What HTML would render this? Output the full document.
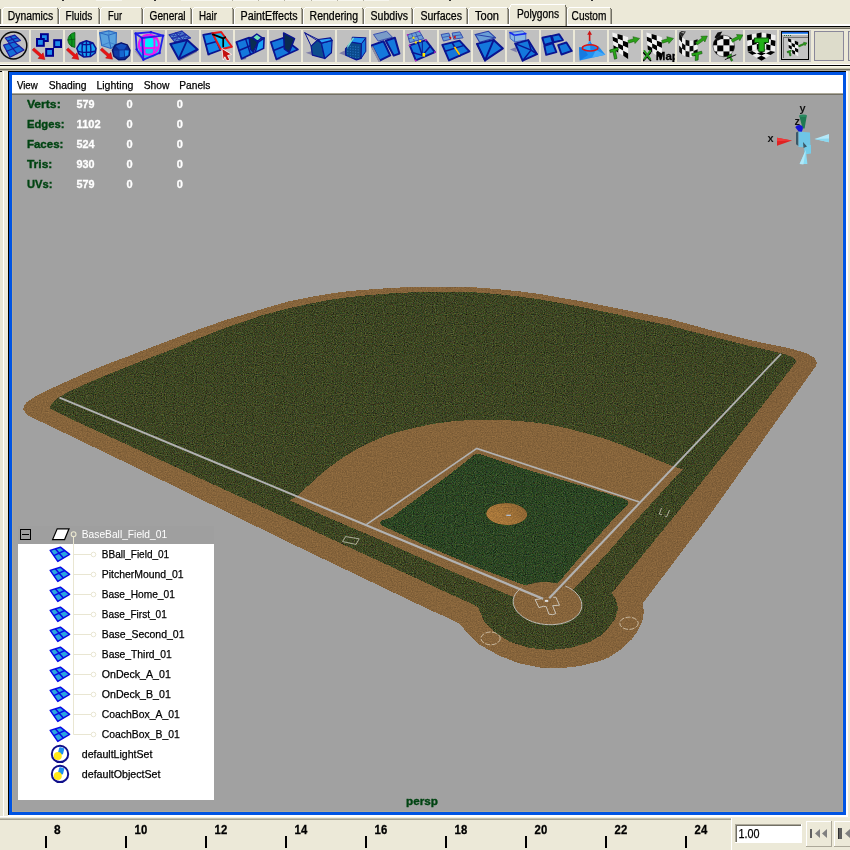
<!DOCTYPE html>
<html><head><meta charset="utf-8"><title>Maya</title>
<style>
html,body{margin:0;padding:0;width:850px;height:850px;overflow:hidden;background:#ece9d8;}
svg{display:block;font-family:"Liberation Sans",sans-serif;}
</style></head><body>
<svg width="850" height="850" viewBox="0 0 850 850" style="opacity:0.9999">
<g shape-rendering="crispEdges">
<rect x="0" y="0" width="850" height="850" fill="#ece9d8" />
<rect x="96" y="0" width="26" height="1" fill="#f6f5ee" />
<rect x="181" y="0" width="208" height="1" fill="#f6f5ee" />
<rect x="232" y="0" width="1" height="1" fill="#b5b2a2" />
<rect x="258" y="0" width="1" height="1" fill="#b5b2a2" />
<rect x="284" y="0" width="1" height="1" fill="#b5b2a2" />
<rect x="311" y="0" width="1" height="1" fill="#b5b2a2" />
<rect x="337" y="0" width="1" height="1" fill="#b5b2a2" />
<rect x="363" y="0" width="1" height="1" fill="#b5b2a2" />
<rect x="62" y="0" width="2" height="1" fill="#303030" />
<rect x="154" y="0" width="2" height="1" fill="#303030" />
<rect x="449" y="0" width="2" height="1" fill="#303030" />
<rect x="591" y="0" width="2" height="1" fill="#303030" />
<rect x="0" y="9" width="1" height="15" fill="#716f64" />
<rect x="2" y="9" width="1" height="15" fill="#ffffff" />
<rect x="3" y="8" width="1" height="1" fill="#ffffff" />
<rect x="4" y="7" width="53" height="1" fill="#ffffff" />
<rect x="57" y="9" width="1" height="15" fill="#aca899" />
<rect x="58" y="9" width="1" height="15" fill="#716f64" />
<rect x="57" y="8" width="1" height="1" fill="#716f64" />
<rect x="59" y="9" width="1" height="15" fill="#ffffff" />
<rect x="60" y="8" width="1" height="1" fill="#ffffff" />
<rect x="61" y="7" width="37" height="1" fill="#ffffff" />
<rect x="98" y="9" width="1" height="15" fill="#aca899" />
<rect x="99" y="9" width="1" height="15" fill="#716f64" />
<rect x="98" y="8" width="1" height="1" fill="#716f64" />
<rect x="100" y="9" width="1" height="15" fill="#ffffff" />
<rect x="101" y="8" width="1" height="1" fill="#ffffff" />
<rect x="102" y="7" width="39" height="1" fill="#ffffff" />
<rect x="141" y="9" width="1" height="15" fill="#aca899" />
<rect x="142" y="9" width="1" height="15" fill="#716f64" />
<rect x="141" y="8" width="1" height="1" fill="#716f64" />
<rect x="143" y="9" width="1" height="15" fill="#ffffff" />
<rect x="144" y="8" width="1" height="1" fill="#ffffff" />
<rect x="145" y="7" width="45" height="1" fill="#ffffff" />
<rect x="190" y="9" width="1" height="15" fill="#aca899" />
<rect x="191" y="9" width="1" height="15" fill="#716f64" />
<rect x="190" y="8" width="1" height="1" fill="#716f64" />
<rect x="192" y="9" width="1" height="15" fill="#ffffff" />
<rect x="193" y="8" width="1" height="1" fill="#ffffff" />
<rect x="194" y="7" width="38" height="1" fill="#ffffff" />
<rect x="232" y="9" width="1" height="15" fill="#aca899" />
<rect x="233" y="9" width="1" height="15" fill="#716f64" />
<rect x="232" y="8" width="1" height="1" fill="#716f64" />
<rect x="234" y="9" width="1" height="15" fill="#ffffff" />
<rect x="235" y="8" width="1" height="1" fill="#ffffff" />
<rect x="236" y="7" width="65" height="1" fill="#ffffff" />
<rect x="301" y="9" width="1" height="15" fill="#aca899" />
<rect x="302" y="9" width="1" height="15" fill="#716f64" />
<rect x="301" y="8" width="1" height="1" fill="#716f64" />
<rect x="303" y="9" width="1" height="15" fill="#ffffff" />
<rect x="304" y="8" width="1" height="1" fill="#ffffff" />
<rect x="305" y="7" width="57" height="1" fill="#ffffff" />
<rect x="362" y="9" width="1" height="15" fill="#aca899" />
<rect x="363" y="9" width="1" height="15" fill="#716f64" />
<rect x="362" y="8" width="1" height="1" fill="#716f64" />
<rect x="364" y="9" width="1" height="15" fill="#ffffff" />
<rect x="365" y="8" width="1" height="1" fill="#ffffff" />
<rect x="366" y="7" width="45" height="1" fill="#ffffff" />
<rect x="411" y="9" width="1" height="15" fill="#aca899" />
<rect x="412" y="9" width="1" height="15" fill="#716f64" />
<rect x="411" y="8" width="1" height="1" fill="#716f64" />
<rect x="413" y="9" width="1" height="15" fill="#ffffff" />
<rect x="414" y="8" width="1" height="1" fill="#ffffff" />
<rect x="415" y="7" width="51" height="1" fill="#ffffff" />
<rect x="466" y="9" width="1" height="15" fill="#aca899" />
<rect x="467" y="9" width="1" height="15" fill="#716f64" />
<rect x="466" y="8" width="1" height="1" fill="#716f64" />
<rect x="468" y="9" width="1" height="15" fill="#ffffff" />
<rect x="469" y="8" width="1" height="1" fill="#ffffff" />
<rect x="470" y="7" width="37" height="1" fill="#ffffff" />
<rect x="507" y="9" width="1" height="15" fill="#aca899" />
<rect x="508" y="9" width="1" height="15" fill="#716f64" />
<rect x="507" y="8" width="1" height="1" fill="#716f64" />
<rect x="567" y="9" width="1" height="15" fill="#ffffff" />
<rect x="568" y="8" width="1" height="1" fill="#ffffff" />
<rect x="569" y="7" width="41" height="1" fill="#ffffff" />
<rect x="610" y="9" width="1" height="15" fill="#aca899" />
<rect x="611" y="9" width="1" height="15" fill="#716f64" />
<rect x="610" y="8" width="1" height="1" fill="#716f64" />
<rect x="0" y="24" width="850" height="2" fill="#ffffff" />
<rect x="0" y="26" width="850" height="1" fill="#000" />
<rect x="0" y="27" width="850" height="1" fill="#b0aa9b" />
<rect x="0" y="28" width="850" height="1" fill="#706e60" />
<rect x="0" y="29" width="850" height="1" fill="#f0eadc" />
<rect x="509" y="5" width="57" height="21" fill="#ece9d8" />
<rect x="509" y="7" width="1" height="19" fill="#ffffff" />
<rect x="510" y="5" width="1" height="2" fill="#ffffff" />
<rect x="511" y="4" width="54" height="1" fill="#ffffff" />
<rect x="565" y="7" width="1" height="19" fill="#aca899" />
<rect x="566" y="7" width="1" height="19" fill="#716f64" />
<rect x="565" y="5" width="1" height="2" fill="#716f64" />
</g>
<text x="7.8" y="20" font-size="12" fill="#000" font-weight="normal" textLength="45.3" lengthAdjust="spacingAndGlyphs"  stroke="#000" stroke-width="0.25">Dynamics</text>
<text x="65.6" y="20" font-size="12" fill="#000" font-weight="normal" textLength="26.8" lengthAdjust="spacingAndGlyphs"  stroke="#000" stroke-width="0.25">Fluids</text>
<text x="108" y="20" font-size="12" fill="#000" font-weight="normal" textLength="14" lengthAdjust="spacingAndGlyphs"  stroke="#000" stroke-width="0.25">Fur</text>
<text x="149.6" y="20" font-size="12" fill="#000" font-weight="normal" textLength="36.0" lengthAdjust="spacingAndGlyphs"  stroke="#000" stroke-width="0.25">General</text>
<text x="199" y="20" font-size="12" fill="#000" font-weight="normal" textLength="18" lengthAdjust="spacingAndGlyphs"  stroke="#000" stroke-width="0.25">Hair</text>
<text x="240.6" y="20" font-size="12" fill="#000" font-weight="normal" textLength="57.0" lengthAdjust="spacingAndGlyphs"  stroke="#000" stroke-width="0.25">PaintEffects</text>
<text x="309.6" y="20" font-size="12" fill="#000" font-weight="normal" textLength="48.4" lengthAdjust="spacingAndGlyphs"  stroke="#000" stroke-width="0.25">Rendering</text>
<text x="370.6" y="20" font-size="12" fill="#000" font-weight="normal" textLength="37.4" lengthAdjust="spacingAndGlyphs"  stroke="#000" stroke-width="0.25">Subdivs</text>
<text x="420.4" y="20" font-size="12" fill="#000" font-weight="normal" textLength="41.6" lengthAdjust="spacingAndGlyphs"  stroke="#000" stroke-width="0.25">Surfaces</text>
<text x="475" y="20" font-size="12" fill="#000" font-weight="normal" textLength="24" lengthAdjust="spacingAndGlyphs"  stroke="#000" stroke-width="0.25">Toon</text>
<text x="571.6" y="20" font-size="12" fill="#000" font-weight="normal" textLength="34.8" lengthAdjust="spacingAndGlyphs"  stroke="#000" stroke-width="0.25">Custom</text>
<text x="517" y="18" font-size="12" fill="#000" font-weight="normal" textLength="42" lengthAdjust="spacingAndGlyphs"  stroke="#000" stroke-width="0.25">Polygons</text>
<g shape-rendering="crispEdges">
<rect x="-3" y="30" width="32" height="32" fill="#c0c0c0" />
<rect x="31" y="30" width="32" height="32" fill="#c0c0c0" />
<rect x="65" y="30" width="32" height="32" fill="#c0c0c0" />
<rect x="99" y="30" width="32" height="32" fill="#c0c0c0" />
<rect x="133" y="30" width="32" height="32" fill="#c0c0c0" />
<rect x="167" y="30" width="32" height="32" fill="#c0c0c0" />
<rect x="201" y="30" width="32" height="32" fill="#c0c0c0" />
<rect x="235" y="30" width="32" height="32" fill="#c0c0c0" />
<rect x="269" y="30" width="32" height="32" fill="#c0c0c0" />
<rect x="303" y="30" width="32" height="32" fill="#c0c0c0" />
<rect x="337" y="30" width="32" height="32" fill="#c0c0c0" />
<rect x="371" y="30" width="32" height="32" fill="#c0c0c0" />
<rect x="405" y="30" width="32" height="32" fill="#c0c0c0" />
<rect x="439" y="30" width="32" height="32" fill="#c0c0c0" />
<rect x="473" y="30" width="32" height="32" fill="#c0c0c0" />
<rect x="507" y="30" width="32" height="32" fill="#c0c0c0" />
<rect x="541" y="30" width="32" height="32" fill="#c0c0c0" />
<rect x="575" y="30" width="32" height="32" fill="#c0c0c0" />
<rect x="609" y="30" width="32" height="32" fill="#c0c0c0" />
<rect x="643" y="30" width="32" height="32" fill="#c0c0c0" />
<rect x="677" y="30" width="32" height="32" fill="#c0c0c0" />
<rect x="711" y="30" width="32" height="32" fill="#c0c0c0" />
<rect x="745" y="30" width="32" height="32" fill="#c0c0c0" />
<rect x="779" y="30" width="32" height="32" fill="#c0c0c0" />
<rect x="814.5" y="31.5" width="29" height="29" fill="#dddccb" stroke="#8a889a" stroke-width="1"/>
<rect x="848.5" y="31.5" width="29" height="29" fill="#dddccb" stroke="#8a889a" stroke-width="1"/>
<rect x="0" y="64" width="850" height="1" fill="#ffffff" />
<rect x="0" y="65" width="850" height="1" fill="#000" />
<rect x="0" y="66" width="850" height="1" fill="#fdfbeb" />
<rect x="0" y="67" width="850" height="1" fill="#f0eedc" />
<rect x="0" y="68" width="850" height="1" fill="#c4c2ae" />
<rect x="0" y="69" width="850" height="1" fill="#706e60" />
<rect x="0" y="70" width="850" height="1" fill="#b0aa9b" />
<rect x="0" y="71" width="2" height="1" fill="#000" />
<rect x="0" y="72" width="3" height="744" fill="#e8e5d4" />
<rect x="3" y="71" width="1" height="745" fill="#ffffff" />
<rect x="4" y="71" width="4" height="747" fill="#ece9d8" />
<rect x="8" y="71" width="838" height="744" fill="#000" />
<rect x="9" y="72" width="837" height="743" fill="#0054e3" />
<rect x="12" y="75" width="831" height="737" fill="#a1a1a1" />
<rect x="12" y="75" width="831" height="18" fill="#ffffff" />
<rect x="12" y="93" width="831" height="1" fill="#aca899" />
<rect x="12" y="94" width="831" height="1" fill="#716f64" />
<rect x="12" y="95" width="1" height="717" fill="#aca899" />
<rect x="842" y="95" width="1" height="717" fill="#aca899" />
<rect x="12" y="811" width="831" height="1" fill="#aca899" />
<rect x="846" y="71" width="2" height="745" fill="#ffffff" />
<rect x="848" y="71" width="2" height="745" fill="#ece9d8" />
<rect x="8" y="815" width="840" height="1" fill="#ffffff" />
<rect x="0" y="816" width="848" height="1" fill="#ffffff" />
<rect x="0" y="817" width="850" height="1" fill="#efede0" />
<rect x="0" y="818" width="731" height="1" fill="#c4c1b0" />
<rect x="0" y="819" width="731" height="1" fill="#a5a292" />
<rect x="731" y="818" width="1" height="32" fill="#ffffff" />
<rect x="732" y="818" width="118" height="32" fill="#ece9d8" />
</g>
<text x="16.9" y="89" font-size="11" fill="#000" font-weight="normal" textLength="20.8" lengthAdjust="spacingAndGlyphs"  stroke="#000" stroke-width="0.25">View</text>
<text x="48.7" y="89" font-size="11" fill="#000" font-weight="normal" textLength="37.8" lengthAdjust="spacingAndGlyphs"  stroke="#000" stroke-width="0.25">Shading</text>
<text x="96.4" y="89" font-size="11" fill="#000" font-weight="normal" textLength="37.0" lengthAdjust="spacingAndGlyphs"  stroke="#000" stroke-width="0.25">Lighting</text>
<text x="143.7" y="89" font-size="11" fill="#000" font-weight="normal" textLength="25.7" lengthAdjust="spacingAndGlyphs"  stroke="#000" stroke-width="0.25">Show</text>
<text x="179.3" y="89" font-size="11" fill="#000" font-weight="normal" textLength="31.1" lengthAdjust="spacingAndGlyphs"  stroke="#000" stroke-width="0.25">Panels</text>
<g shape-rendering="crispEdges">
<rect x="45" y="836" width="2" height="12" fill="#000" />
<rect x="125" y="836" width="2" height="12" fill="#000" />
<rect x="205" y="836" width="2" height="12" fill="#000" />
<rect x="285" y="836" width="2" height="12" fill="#000" />
<rect x="365" y="836" width="2" height="12" fill="#000" />
<rect x="445" y="836" width="2" height="12" fill="#000" />
<rect x="525" y="836" width="2" height="12" fill="#000" />
<rect x="605" y="836" width="2" height="12" fill="#000" />
<rect x="685" y="836" width="2" height="12" fill="#000" />
</g>
<text x="54" y="833.8" font-size="13" fill="#000" font-weight="bold" textLength="6.6" lengthAdjust="spacingAndGlyphs" stroke="#000" stroke-width="0.3">8</text>
<text x="134.6" y="833.8" font-size="13" fill="#000" font-weight="bold" textLength="12.6" lengthAdjust="spacingAndGlyphs" stroke="#000" stroke-width="0.3">10</text>
<text x="214.6" y="833.8" font-size="13" fill="#000" font-weight="bold" textLength="12.6" lengthAdjust="spacingAndGlyphs" stroke="#000" stroke-width="0.3">12</text>
<text x="294.6" y="833.8" font-size="13" fill="#000" font-weight="bold" textLength="12.6" lengthAdjust="spacingAndGlyphs" stroke="#000" stroke-width="0.3">14</text>
<text x="374.6" y="833.8" font-size="13" fill="#000" font-weight="bold" textLength="12.6" lengthAdjust="spacingAndGlyphs" stroke="#000" stroke-width="0.3">16</text>
<text x="454.6" y="833.8" font-size="13" fill="#000" font-weight="bold" textLength="12.6" lengthAdjust="spacingAndGlyphs" stroke="#000" stroke-width="0.3">18</text>
<text x="534.6" y="833.8" font-size="13" fill="#000" font-weight="bold" textLength="12.6" lengthAdjust="spacingAndGlyphs" stroke="#000" stroke-width="0.3">20</text>
<text x="614.6" y="833.8" font-size="13" fill="#000" font-weight="bold" textLength="12.6" lengthAdjust="spacingAndGlyphs" stroke="#000" stroke-width="0.3">22</text>
<text x="694.6" y="833.8" font-size="13" fill="#000" font-weight="bold" textLength="12.6" lengthAdjust="spacingAndGlyphs" stroke="#000" stroke-width="0.3">24</text>
<g shape-rendering="crispEdges">
<rect x="735" y="824" width="67" height="19" fill="#ffffff" />
<rect x="735" y="824" width="67" height="1" fill="#aca899" />
<rect x="735" y="824" width="1" height="19" fill="#aca899" />
<rect x="736" y="825" width="65" height="1" fill="#716f64" />
<rect x="736" y="825" width="1" height="17" fill="#716f64" />
<rect x="735" y="842" width="67" height="1" fill="#ffffff" />
<rect x="801" y="824" width="1" height="19" fill="#ffffff" />
<rect x="806" y="821" width="26" height="26" fill="#ece9d8" />
<rect x="806" y="821" width="26" height="1" fill="#ffffff" />
<rect x="806" y="821" width="1" height="26" fill="#ffffff" />
<rect x="806" y="846" width="26" height="1" fill="#aca899" />
<rect x="831" y="821" width="1" height="26" fill="#aca899" />
<rect x="834" y="821" width="26" height="26" fill="#ece9d8" />
<rect x="834" y="821" width="26" height="1" fill="#ffffff" />
<rect x="834" y="821" width="1" height="26" fill="#ffffff" />
<rect x="834" y="846" width="26" height="1" fill="#aca899" />
<rect x="859" y="821" width="1" height="26" fill="#aca899" />
</g>
<text x="738.5" y="838" font-size="12" fill="#000" font-weight="normal" textLength="21" lengthAdjust="spacingAndGlyphs"  stroke="#000" stroke-width="0.25">1.00</text>
<g fill="#808080">
<rect x="810" y="829" width="2" height="9" fill="#606060" />
<polygon points="820,829 820,838 815,833.5"/>
<polygon points="827,829 827,838 822,833.5"/>
<rect x="839" y="828" width="3" height="11" fill="#606060" />
<rect x="838" y="828" width="1" height="11" fill="#303030" />
<polygon points="850,829 850,838 845,833.5"/>
</g>
<clipPath id="c0"><rect x="-3" y="30" width="32" height="32"/></clipPath>
<clipPath id="c1"><rect x="31" y="30" width="32" height="32"/></clipPath>
<clipPath id="c2"><rect x="65" y="30" width="32" height="32"/></clipPath>
<clipPath id="c3"><rect x="99" y="30" width="32" height="32"/></clipPath>
<clipPath id="c4"><rect x="133" y="30" width="32" height="32"/></clipPath>
<clipPath id="c5"><rect x="167" y="30" width="32" height="32"/></clipPath>
<clipPath id="c6"><rect x="201" y="30" width="32" height="32"/></clipPath>
<clipPath id="c7"><rect x="235" y="30" width="32" height="32"/></clipPath>
<clipPath id="c8"><rect x="269" y="30" width="32" height="32"/></clipPath>
<clipPath id="c9"><rect x="303" y="30" width="32" height="32"/></clipPath>
<clipPath id="c10"><rect x="337" y="30" width="32" height="32"/></clipPath>
<clipPath id="c11"><rect x="371" y="30" width="32" height="32"/></clipPath>
<clipPath id="c12"><rect x="405" y="30" width="32" height="32"/></clipPath>
<clipPath id="c13"><rect x="439" y="30" width="32" height="32"/></clipPath>
<clipPath id="c14"><rect x="473" y="30" width="32" height="32"/></clipPath>
<clipPath id="c15"><rect x="507" y="30" width="32" height="32"/></clipPath>
<clipPath id="c16"><rect x="541" y="30" width="32" height="32"/></clipPath>
<clipPath id="c17"><rect x="575" y="30" width="32" height="32"/></clipPath>
<clipPath id="c18"><rect x="609" y="30" width="32" height="32"/></clipPath>
<clipPath id="c19"><rect x="643" y="30" width="32" height="32"/></clipPath>
<clipPath id="c20"><rect x="677" y="30" width="32" height="32"/></clipPath>
<clipPath id="c21"><rect x="711" y="30" width="32" height="32"/></clipPath>
<clipPath id="c22"><rect x="745" y="30" width="32" height="32"/></clipPath>
<clipPath id="c23"><rect x="779" y="30" width="32" height="32"/></clipPath>
<clipPath id="c24"><rect x="813" y="30" width="32" height="32"/></clipPath>
<clipPath id="c25"><rect x="847" y="30" width="32" height="32"/></clipPath>
<clipPath id="c26"><rect x="881" y="30" width="32" height="32"/></clipPath>
<g clip-path="url(#c0)">
<polygon points="5.2,38.0 14.8,35.1 20.4,40.4 10.0,44.0" fill="#146ed7" stroke="#1a1aa0" stroke-width="1.2" stroke-linejoin="round" />
<polyline points="10.0,36.5 15.2,42.2" fill="none" stroke="#1a1aa0" stroke-width="1.2" stroke-linecap="round" stroke-linejoin="round" />
<polyline points="7.6,41.0 17.6,37.7" fill="none" stroke="#1a1aa0" stroke-width="1.2" stroke-linecap="round" stroke-linejoin="round" />
<polygon points="3.6,45.2 14.4,42.0 24.0,50.0 10.0,57.2" fill="#146ed7" stroke="#1a1aa0" stroke-width="1.2" stroke-linejoin="round" />
<polyline points="9.0,43.6 17.0,53.6" fill="none" stroke="#1a1aa0" stroke-width="1.2" stroke-linecap="round" stroke-linejoin="round" />
<polyline points="6.8,51.2 19.2,46.0" fill="none" stroke="#1a1aa0" stroke-width="1.2" stroke-linecap="round" stroke-linejoin="round" />
<circle cx="13.4" cy="45.5" r="13.4" fill="none" stroke="#0a0a0a" stroke-width="1.5"/>
</g>
<g clip-path="url(#c1)">
<rect x="41" y="34.2" width="6.8" height="6.8" fill="#1e8cec" stroke="#00008c" stroke-width="2"/>
<rect x="37" y="39" width="6.8" height="6.8" fill="#1e8cec" stroke="#00008c" stroke-width="2"/>
<rect x="54.2" y="40.2" width="6.8" height="6.8" fill="#1e8cec" stroke="#00008c" stroke-width="2"/>
<rect x="46.2" y="49" width="6.8" height="6.8" fill="#1e8cec" stroke="#00008c" stroke-width="2"/>
<polygon points="32.2,50.0 39.6,56.6 38.1,58.4 44.9,59.5 43.1,52.8 41.5,54.5 34.1,47.9" fill="#e81414" stroke="#b00808" stroke-width="0.5" stroke-linejoin="round" />
</g>
<g clip-path="url(#c2)">
<path d="M74.9,32.5 A7.9,7.5 0 0 0 74.9,47.4 Z" fill="#0c9a1c" stroke="#065410" stroke-width="0.8"/>
<polyline points="70.6,35.4 72.0,40.7 71.8,46.6" fill="none" stroke="#065410" stroke-width="0.8" stroke-linecap="round" stroke-linejoin="round" />
<polyline points="67.8,39.9 74.8,39.2" fill="none" stroke="#065410" stroke-width="0.8" stroke-linecap="round" stroke-linejoin="round" />
<path d="M76.80000000000001,48.3 L79.9,43.199999999999996 L86.4,40.8 L92.9,43.0 L96.0,48.3 L95.2,53.0 L90.4,56.599999999999994 L83.9,57.0 L78.80000000000001,53.8 Z" fill="#16a2f2" stroke="#0a1490" stroke-width="1.5" stroke-linejoin="round"/>
<path d="M79.9,43.4 Q86.4,46.3 92.9,43.199999999999996 M77.80000000000001,51.4 Q86.4,53.4 95.2,51.199999999999996 M86.4,40.8 V56.8 M83.0,41.8 Q81.0,48.8 83.2,56.8 M89.80000000000001,41.8 Q91.80000000000001,48.8 90.0,56.599999999999994" fill="none" stroke="#0a1490" stroke-width="1.4"/>
<polygon points="66.3,50.0 73.5,56.6 71.9,58.3 78.8,59.5 77.0,52.8 75.4,54.5 68.2,47.9" fill="#e81414" stroke="#b00808" stroke-width="0.5" stroke-linejoin="round" />
</g>
<g clip-path="url(#c3)">
<polygon points="99.6,32.8 108.8,30.9 116.4,32.8 116.1,44.8 110.9,48.4 101.7,45.4" fill="#5aa2de" stroke="#2a68c0" stroke-width="1.1" stroke-linejoin="round" />
<polyline points="99.6,32.8 108.2,35.2 116.4,32.8" fill="none" stroke="#2a68c0" stroke-width="1.0" stroke-linecap="round" stroke-linejoin="round" />
<polyline points="108.2,35.2 110.9,48.4" fill="none" stroke="#2a68c0" stroke-width="1.0" stroke-linecap="round" stroke-linejoin="round" />
<polyline points="108.8,30.9 109.4,42.5 101.7,45.4" fill="none" stroke="#3a78c8" stroke-width="0.8" stroke-linecap="round" stroke-linejoin="round" />
<polyline points="109.4,42.5 116.1,44.8" fill="none" stroke="#3a78c8" stroke-width="0.8" stroke-linecap="round" stroke-linejoin="round" />
<path d="M112.4,50.2 L115.2,45.2 L121.2,42.800000000000004 L127.2,44.800000000000004 L130.0,50.2 L129.2,55.6 L124.8,59.6 L118.60000000000001,59.800000000000004 L113.8,56.2 Z" fill="#0c2a90" stroke="#08146c" stroke-width="1.4" stroke-linejoin="round"/>
<path d="M115.8,46.0 L119.2,49.6 L124.2,49.400000000000006 L126.8,45.6 L121.2,43.800000000000004 Z" fill="#1450c0"/>
<path d="M124.60000000000001,50.2 L128.8,50.6 L128.2,55.2 L125.0,56.6 Z" fill="#1e90ec"/>
<path d="M119.4,50.400000000000006 L123.8,50.2 L124.2,56.800000000000004 L119.60000000000001,57.2 Z" fill="#1668d0"/>
<path d="M113.8,50.800000000000004 L118.60000000000001,50.400000000000006 L118.8,57.0 L114.60000000000001,55.400000000000006 Z" fill="#103aa4"/>
<polygon points="100.2,50.0 107.2,56.3 105.6,58.1 112.5,59.2 110.7,52.4 109.1,54.2 102.1,47.9" fill="#e81414" stroke="#b00808" stroke-width="0.5" stroke-linejoin="round" />
</g>
<g clip-path="url(#c4)">
<polygon points="134.5,50.9 142.6,60.6 150.2,57.7 144.7,51.7" fill="#9c9ca4" />
<circle cx="148.9" cy="44.8" r="10.6" fill="#00f0ff"/>
<path d="M138.3,47.4 A10.6,10.6 0 0 0 159.5,47.4 Z" fill="#12c4f0"/>
<path d="M138.3,44.8 A10.6,10.6 0 0 1 143.9,34.8 L144.3,54.8 A10.6,10.6 0 0 1 138.3,44.8 Z" fill="#10a8d8" opacity="0.55"/>
<g fill="none" stroke="#f418f0" stroke-width="1.9">
<circle cx="148.9" cy="44.8" r="10.0"/>
<path d="M138.8,47.199999999999996 Q148.9,49.0 159.0,47.199999999999996"/>
<path d="M144.5,34.8 Q143.3,44.8 144.9,55.0"/>
<path d="M153.70000000000002,35.0 Q155.5,44.8 153.3,54.8"/>
<path d="M139.9,38.8 Q148.9,35.3 157.9,38.8" stroke-width="1.5"/>
</g>
<polyline points="135.6,33.5 150.9,32.2 163.1,35.6 142.0,38.0 135.6,33.5 136.7,49.4 143.4,59.6 159.5,53.0 163.1,35.6" fill="none" stroke="#2222ea" stroke-width="1.8" stroke-linecap="round" stroke-linejoin="round" />
<polyline points="142.0,38.0 143.4,59.6" fill="none" stroke="#2222ea" stroke-width="1.8" stroke-linecap="round" stroke-linejoin="round" />
<circle cx="135.6" cy="33.5" r="1.2" fill="#1a1ae0"/>
<circle cx="150.9" cy="32.2" r="1.2" fill="#1a1ae0"/>
<circle cx="163.1" cy="35.6" r="1.2" fill="#1a1ae0"/>
<circle cx="142.0" cy="38.0" r="1.2" fill="#1a1ae0"/>
<circle cx="136.7" cy="49.4" r="1.2" fill="#1a1ae0"/>
<circle cx="143.4" cy="59.6" r="1.2" fill="#1a1ae0"/>
<circle cx="159.5" cy="53.0" r="1.2" fill="#1a1ae0"/>
</g>
<g clip-path="url(#c5)">
<polygon points="169.7,46.6 179.4,61.3 197.0,52.1 197.0,50.1 178.2,59.5" fill="#7a7a98" />
<polygon points="169.2,34.8 181.9,31.2 190.4,38.0 174.8,42.0" fill="#5e98d6" stroke="#2030a8" stroke-width="1.2" stroke-linejoin="round" />
<polyline points="175.6,33.0 182.6,40.0" fill="none" stroke="#2030a8" stroke-width="1.1" stroke-linecap="round" stroke-linejoin="round" />
<polyline points="172.0,38.4 186.2,34.6" fill="none" stroke="#2030a8" stroke-width="1.1" stroke-linecap="round" stroke-linejoin="round" />
<polyline points="169.2,34.8 190.4,38.0" fill="none" stroke="#2030a8" stroke-width="0.9" stroke-linecap="round" stroke-linejoin="round" />
<polyline points="181.9,31.2 174.8,42.0" fill="none" stroke="#2030a8" stroke-width="0.9" stroke-linecap="round" stroke-linejoin="round" />
<polyline points="175.6,33.0 186.2,34.6 182.6,40.0 172.0,38.4 175.6,33.0" fill="none" stroke="#2030a8" stroke-width="0.8" stroke-linecap="round" stroke-linejoin="round" />
<polygon points="170.4,44.0 187.2,40.0 197.6,49.5 178.8,59.2" fill="#1478d6" stroke="#0a1490" stroke-width="2.0" stroke-linejoin="round" />
<polyline points="187.2,40.0 179.2,57.8" fill="none" stroke="#0a1490" stroke-width="1.8" stroke-linecap="round" stroke-linejoin="round" />
</g>
<g clip-path="url(#c6)">
<polygon points="204.1,37.2 207.6,55.4 209.9,55.4" fill="#7a7a98" />
<polygon points="203.2,34.8 212.8,33.2 220.4,50.0 208.4,54.4" fill="#1488e8" stroke="#0a1490" stroke-width="1.8" stroke-linejoin="round" />
<polyline points="205.8,44.6 216.6,41.6" fill="none" stroke="#0a1490" stroke-width="1.6" stroke-linecap="round" stroke-linejoin="round" />
<polygon points="212.4,33.2 221.2,32.0 231.9,46.8 220.8,49.2" fill="#10bcf4" stroke="#e41818" stroke-width="1.9" stroke-linejoin="round" />
<polyline points="212.8,34.4 223.2,38.4 225.2,37.2" fill="none" stroke="#000" stroke-width="1.7" stroke-linecap="round" stroke-linejoin="round" />
<polyline points="223.2,38.4 223.2,46.4" fill="none" stroke="#000" stroke-width="1.7" stroke-linecap="round" stroke-linejoin="round" />
<polygon points="221.9,48.4 231.6,54.4 227.6,55.6 229.9,60.0 226.8,60.8 224.8,56.8 223.2,60.0" fill="#c41010" stroke="#fff" stroke-width="0.8" stroke-linejoin="round" />
</g>
<g clip-path="url(#c7)">
<polygon points="237.0,44.8 241.7,60.1 246.4,58.9" fill="#7a7a98" />
<polygon points="236.4,42.0 249.2,37.6 254.1,52.8 241.6,58.8" fill="#1478dc" stroke="#0a1490" stroke-width="1.8" stroke-linejoin="round" />
<polyline points="239.0,50.4 251.6,45.2" fill="none" stroke="#0a1490" stroke-width="1.6" stroke-linecap="round" stroke-linejoin="round" />
<polyline points="245.6,38.9 250.6,54.5" fill="none" stroke="#0a1490" stroke-width="1.4" stroke-linecap="round" stroke-linejoin="round" />
<polygon points="257.9,42.4 264.1,38.0 263.6,48.4 255.2,52.4" fill="#18a0f6" stroke="#0a1490" stroke-width="1.6" stroke-linejoin="round" />
<polygon points="249.2,37.8 252.3,37.4 257.9,42.4 253.2,52.0 250.4,49.2" fill="#0a2c50" stroke="#0a1490" stroke-width="1.4" stroke-linejoin="round" />
<polygon points="252.3,37.4 256.8,34.0 261.9,37.6 257.6,41.3" fill="#72e6b8" stroke="#0a1490" stroke-width="1.5" stroke-linejoin="round" />
<polyline points="261.9,37.6 264.1,38.0" fill="none" stroke="#0a1490" stroke-width="1.4" stroke-linecap="round" stroke-linejoin="round" />
</g>
<g clip-path="url(#c8)">
<polygon points="271.4,44.8 276.1,60.4 280.8,59.2" fill="#7a7a98" />
<polygon points="270.8,42.0 282.8,38.0 297.9,49.5 276.4,59.2" fill="#1478dc" stroke="#0a1490" stroke-width="1.8" stroke-linejoin="round" />
<polyline points="273.6,50.6 290.4,43.8" fill="none" stroke="#0a1490" stroke-width="1.6" stroke-linecap="round" stroke-linejoin="round" />
<polygon points="283.6,32.9 294.6,38.6 289.2,52.4 284.3,48.9" fill="#0a2c50" stroke="#0a1490" stroke-width="1.5" stroke-linejoin="round" />
</g>
<g clip-path="url(#c9)">
<polygon points="305.7,52.7 312.3,51.1 313.1,55.4" fill="#7c7ca8" />
<polygon points="311.1,46.1 318.2,39.5 321.4,43.2 324.8,58.5 312.4,55.2" fill="#0c4c8c" stroke="#0a1490" stroke-width="1.2" stroke-linejoin="round" />
<polygon points="321.4,43.2 332.1,40.4 331.4,52.7 324.8,58.5" fill="#1478dc" stroke="#0a1490" stroke-width="1.2" stroke-linejoin="round" />
<polygon points="318.2,39.5 330.5,37.9 332.1,40.4 321.4,43.2" fill="#2aa0f8" stroke="#0a1490" stroke-width="1.2" stroke-linejoin="round" />
<polyline points="304.9,32.9 318.2,39.5" fill="none" stroke="#0a1490" stroke-width="1" stroke-linecap="round" stroke-linejoin="round" />
<polyline points="304.9,32.9 311.1,46.1" fill="none" stroke="#0a1490" stroke-width="1" stroke-linecap="round" stroke-linejoin="round" />
<polyline points="304.9,32.9 321.4,43.2" fill="none" stroke="#0a1490" stroke-width="0.9" stroke-linecap="round" stroke-linejoin="round" />
</g>
<g clip-path="url(#c10)">
<polygon points="339.1,53.3 345.8,50.1 346.4,56.0" fill="#7c7ca8" />
<polygon points="345.5,48.9 351.7,42.2 361.5,43.6 361.1,58.4 356.4,59.9 345.8,55.2" fill="#0a4a8c" stroke="#0a1490" stroke-width="1.2" stroke-linejoin="round" />
<polygon points="361.5,43.6 365.8,37.8 365.8,51.3 361.1,58.4" fill="#1478dc" stroke="#0a1490" stroke-width="1" stroke-linejoin="round" />
<polygon points="352.3,37.2 365.8,37.8 361.5,43.6 351.7,42.2" fill="#1e90f0" stroke="#0a1490" stroke-width="1" stroke-linejoin="round" />
<polyline points="347.6,46.9 353.2,38.4" fill="none" stroke="#7ce0d0" stroke-width="1.4" stroke-linecap="round" stroke-linejoin="round" />
<g fill="#2a78c8">
<circle cx="347.8" cy="46.0" r="0.6"/>
<circle cx="350.4" cy="46.3" r="0.6"/>
<circle cx="353.0" cy="46.6" r="0.6"/>
<circle cx="355.6" cy="46.9" r="0.6"/>
<circle cx="358.2" cy="47.2" r="0.6"/>
<circle cx="347.8" cy="48.6" r="0.6"/>
<circle cx="350.4" cy="48.9" r="0.6"/>
<circle cx="353.0" cy="49.2" r="0.6"/>
<circle cx="355.6" cy="49.5" r="0.6"/>
<circle cx="358.2" cy="49.8" r="0.6"/>
<circle cx="347.8" cy="51.2" r="0.6"/>
<circle cx="350.4" cy="51.5" r="0.6"/>
<circle cx="353.0" cy="51.8" r="0.6"/>
<circle cx="355.6" cy="52.1" r="0.6"/>
<circle cx="358.2" cy="52.4" r="0.6"/>
<circle cx="347.8" cy="53.8" r="0.6"/>
<circle cx="350.4" cy="54.1" r="0.6"/>
<circle cx="353.0" cy="54.4" r="0.6"/>
<circle cx="355.6" cy="54.7" r="0.6"/>
<circle cx="358.2" cy="55.0" r="0.6"/>
<circle cx="347.8" cy="56.4" r="0.6"/>
<circle cx="350.4" cy="56.7" r="0.6"/>
<circle cx="353.0" cy="57.0" r="0.6"/>
<circle cx="355.6" cy="57.3" r="0.6"/>
<circle cx="358.2" cy="57.6" r="0.6"/>
</g>
</g>
<g clip-path="url(#c11)">
<polygon points="373.5,34.5 386.6,31.3 392.5,37.2 378.2,41.1" fill="#7a9cc8" stroke="#3a50b0" stroke-width="1" stroke-linejoin="round" />
<polygon points="371.7,45.4 383.5,41.3 390.2,55.4 379.6,60.7" fill="#1478dc" stroke="#0a1490" stroke-width="2.0" stroke-linejoin="round" />
<polygon points="385.8,40.7 394.9,37.8 399.4,53.6 393.7,55.6" fill="#1478dc" stroke="#0a1490" stroke-width="2.0" stroke-linejoin="round" />
<polyline points="372.3,47.2 379.4,61.3" fill="none" stroke="#8c8ca0" stroke-width="2" stroke-linecap="round" stroke-linejoin="round" />
</g>
<g clip-path="url(#c12)">
<polygon points="407.6,34.8 419.4,31.3 423.8,38.7 409.7,42.7" fill="#6a9fd6" stroke="#3a50b0" stroke-width="1" stroke-linejoin="round" />
<polyline points="411.5,33.6 414.4,41.4" fill="none" stroke="#3a50b0" stroke-width="0.9" stroke-linecap="round" stroke-linejoin="round" />
<polyline points="415.4,32.5 419.1,40.0" fill="none" stroke="#3a50b0" stroke-width="0.9" stroke-linecap="round" stroke-linejoin="round" />
<polyline points="408.6,38.8 421.6,35.0" fill="none" stroke="#3a50b0" stroke-width="0.9" stroke-linecap="round" stroke-linejoin="round" />
<polygon points="409.7,45.4 425.8,40.1 434.9,52.1 415.8,60.4" fill="#1478dc" stroke="#0a1490" stroke-width="1.9" stroke-linejoin="round" />
<polyline points="418.2,43.1 422.3,55.4" fill="none" stroke="#0a1490" stroke-width="1.5" stroke-linecap="round" stroke-linejoin="round" />
<polyline points="412.3,52.5 422.3,55.4 430.5,46.0" fill="none" stroke="#0a1490" stroke-width="1.5" stroke-linecap="round" stroke-linejoin="round" />
<polyline points="422.3,42.5 422.3,55.4" fill="none" stroke="#0a1490" stroke-width="1.0" stroke-linecap="round" stroke-linejoin="round" />
<rect x="412.5" y="36.8" width="2" height="2" fill="#ffe800"/>
<rect x="419.1" y="40.1" width="2" height="2" fill="#ffe800"/>
<rect x="414.8" y="41.5" width="2" height="2" fill="#ffe800"/>
<rect x="422.5" y="53.0" width="2.6" height="3.6" fill="#ffe800"/>
<circle cx="407.6" cy="34.8" r="0.9" fill="#c020c0"/>
<circle cx="419.4" cy="31.3" r="0.9" fill="#c020c0"/>
<circle cx="409.7" cy="45.4" r="0.9" fill="#c020c0"/>
<circle cx="425.8" cy="40.1" r="0.9" fill="#c020c0"/>
<circle cx="434.9" cy="52.1" r="0.9" fill="#c020c0"/>
<circle cx="415.8" cy="60.4" r="0.9" fill="#c020c0"/>
</g>
<g clip-path="url(#c13)">
<polygon points="441.1,34.5 448.8,33.1 450.9,39.2 443.5,41.1" fill="#6a9fd6" stroke="#3a50b0" stroke-width="1" stroke-linejoin="round" />
<polygon points="452.1,33.1 459.9,31.9 463.1,37.8 453.7,39.2" fill="#6a9fd6" stroke="#3a50b0" stroke-width="1" stroke-linejoin="round" />
<polyline points="442.3,37.5 449.9,36.0" fill="none" stroke="#3a50b0" stroke-width="0.8" stroke-linecap="round" stroke-linejoin="round" />
<polyline points="452.9,36.0 461.5,34.8" fill="none" stroke="#3a50b0" stroke-width="0.8" stroke-linecap="round" stroke-linejoin="round" />
<polygon points="442.3,44.8 459.6,40.7 469.4,51.3 449.0,60.4" fill="#1478dc" stroke="#0a1490" stroke-width="1.9" stroke-linejoin="round" />
<polyline points="445.2,51.3 464.1,45.4" fill="none" stroke="#0a1490" stroke-width="1.5" stroke-linecap="round" stroke-linejoin="round" />
<polyline points="452.1,42.5 459.9,56.0" fill="none" stroke="#0a1490" stroke-width="1.5" stroke-linecap="round" stroke-linejoin="round" />
<polyline points="454.9,47.4 459.1,54.0" fill="none" stroke="#ffc800" stroke-width="1.8" stroke-linecap="round" stroke-linejoin="round" />
<polygon points="448.8,36.4 451.4,37.2 450.9,39.2 449.7,38.7" fill="#d01010" />
<polygon points="453.7,36.4 455.8,35.6 455.6,38.7 454.2,38.2" fill="#d01010" />
</g>
<g clip-path="url(#c14)">
<polygon points="475.2,34.5 488.5,31.3 495.6,37.8 479.6,42.2" fill="#6a9fd6" stroke="#2a40a8" stroke-width="1.1" stroke-linejoin="round" />
<polyline points="475.2,34.5 495.6,37.8" fill="none" stroke="#2a40a8" stroke-width="1" stroke-linecap="round" stroke-linejoin="round" />
<polygon points="477.0,43.9 493.7,39.9 502.9,48.4 485.0,60.4" fill="#1478dc" stroke="#0a1490" stroke-width="2.0" stroke-linejoin="round" />
<polyline points="493.7,39.9 485.0,60.4" fill="none" stroke="#0a1490" stroke-width="1.9" stroke-linecap="round" stroke-linejoin="round" />
<polyline points="477.0,43.9 485.0,60.4" fill="none" stroke="#0a1490" stroke-width="1.5" stroke-linecap="round" stroke-linejoin="round" />
</g>
<g clip-path="url(#c15)">
<polygon points="509.9,32.5 522.3,30.9 525.8,33.6 525.8,40.1 514.6,41.9 510.2,38.4" fill="#8ab8e4" stroke="#3a60c0" stroke-width="0.9" stroke-linejoin="round" />
<polyline points="509.9,32.5 514.4,35.2 525.8,33.6" fill="none" stroke="#1428f0" stroke-width="1.6" stroke-linecap="round" stroke-linejoin="round" />
<polyline points="514.4,35.2 514.6,41.9" fill="none" stroke="#3a60c0" stroke-width="0.9" stroke-linecap="round" stroke-linejoin="round" />
<polygon points="509.9,49.5 515.8,47.2 517.0,52.5" fill="#7c7ca8" />
<polygon points="515.2,43.6 528.2,40.1 537.0,54.2 522.6,60.7" fill="#1478dc" stroke="#0a1490" stroke-width="1.9" stroke-linejoin="round" />
<polyline points="528.2,40.1 531.1,50.1 522.6,60.7" fill="none" stroke="#0a1490" stroke-width="1.5" stroke-linecap="round" stroke-linejoin="round" />
<polyline points="515.2,43.6 531.1,50.1 537.0,54.2" fill="none" stroke="#0a1490" stroke-width="1.5" stroke-linecap="round" stroke-linejoin="round" />
</g>
<g clip-path="url(#c16)">
<polygon points="542.3,37.8 550.9,35.9 552.9,42.5 544.3,44.8" fill="#1478dc" stroke="#0a1490" stroke-width="1.9" stroke-linejoin="round" />
<polygon points="551.8,35.9 559.1,34.2 562.9,40.1 553.7,42.2" fill="#1478dc" stroke="#0a1490" stroke-width="1.9" stroke-linejoin="round" />
<polygon points="544.3,45.8 552.8,43.2 556.4,52.1 546.2,54.9" fill="#1478dc" stroke="#0a1490" stroke-width="1.9" stroke-linejoin="round" />
<polygon points="558.2,45.1 566.4,42.5 571.8,50.9 561.5,54.5" fill="#1478dc" stroke="#0a1490" stroke-width="1.9" stroke-linejoin="round" />
</g>
<g clip-path="url(#c17)">
<polygon points="579,47.2 598.5,46.2 605.4,54.8 579.8,60.6" fill="#1e90f2"/>
<polygon points="579,47.2 584,48.5 588,55 579.8,60.6" fill="#167ae0"/>
<polygon points="596,50 605.4,54.8 592,57.8" fill="#48aaf8"/>
<path d="M581.6,48.4 Q587.6,46.6 589.6,39.6 Q591.8,46.6 598.4,48.4 Q590,52 581.6,48.4 Z" fill="#36a8fa"/>
<path d="M589.6,39.6 Q591.8,46.6 598.4,48.4 Q594,50.4 590.5,50.4 Z" fill="#1c84ec"/>
<ellipse cx="590.1" cy="47.9" rx="7.8" ry="3.1" fill="none" stroke="#d81414" stroke-width="1.6"/>
<path d="M589.6,41 V34" stroke="#cc1414" stroke-width="1.6"/>
<polygon points="589.6,30.6 592,34.8 587.2,34.8" fill="#cc1414"/>
</g>
<g clip-path="url(#c18)">
<polygon points="612.3,32.5 617.5,34.0 617.8,38.7 612.6,36.7" fill="#f0f0f0" />
<polygon points="612.6,36.7 617.8,38.7 618.0,43.4 613.0,41.0" fill="#000" />
<polygon points="613.0,41.0 618.0,43.4 618.3,48.0 613.4,45.3" fill="#f0f0f0" />
<polygon points="613.4,45.3 618.3,48.0 618.5,52.7 613.7,49.5" fill="#000" />
<polygon points="617.5,34.0 622.8,35.6 622.9,40.7 617.8,38.7" fill="#000" />
<polygon points="617.8,38.7 622.9,40.7 623.0,45.7 618.0,43.4" fill="#f0f0f0" />
<polygon points="618.0,43.4 623.0,45.7 623.2,50.8 618.3,48.0" fill="#000" />
<polygon points="618.3,48.0 623.2,50.8 623.3,55.8 618.5,52.7" fill="#f0f0f0" />
<polygon points="622.8,35.6 628.1,37.2 628.1,42.6 622.9,40.7" fill="#f0f0f0" />
<polygon points="622.9,40.7 628.1,42.6 628.1,48.1 623.0,45.7" fill="#000" />
<polygon points="623.0,45.7 628.1,48.1 628.1,53.5 623.2,50.8" fill="#f0f0f0" />
<polygon points="623.2,50.8 628.1,53.5 628.1,58.9 623.3,55.8" fill="#000" />
<polygon points="628.6,43.2 634.4,41.4 635.0,43.5 639.6,38.4 632.9,36.7 633.6,38.7 627.8,40.5" fill="#2aa018" stroke="#145808" stroke-width="0.5" stroke-linejoin="round" />
<polygon points="609.7,50.1 617.7,47.6 618.3,50.1 615.5,51.0 617.0,58.4 614.5,59.2 613.0,51.8 610.3,52.6" fill="#28a818" stroke="#0c4808" stroke-width="0.6" stroke-linejoin="round" />
</g>
<g clip-path="url(#c19)">
<polygon points="646.4,32.5 651.6,34.0 651.8,38.7 646.8,36.7" fill="#f0f0f0" />
<polygon points="646.8,36.7 651.8,38.7 652.1,43.4 647.1,41.0" fill="#000" />
<polygon points="647.1,41.0 652.1,43.4 652.3,48.0 647.5,45.3" fill="#f0f0f0" />
<polygon points="647.5,45.3 652.3,48.0 652.5,52.7 647.8,49.5" fill="#000" />
<polygon points="651.6,34.0 656.8,35.6 656.9,40.7 651.8,38.7" fill="#000" />
<polygon points="651.8,38.7 656.9,40.7 657.0,45.7 652.1,43.4" fill="#f0f0f0" />
<polygon points="652.1,43.4 657.0,45.7 657.1,50.8 652.3,48.0" fill="#000" />
<polygon points="652.3,48.0 657.1,50.8 657.2,55.8 652.5,52.7" fill="#f0f0f0" />
<polygon points="656.8,35.6 661.9,37.2 661.9,42.6 656.9,40.7" fill="#f0f0f0" />
<polygon points="656.9,40.7 661.9,42.6 661.9,48.1 657.0,45.7" fill="#000" />
<polygon points="657.0,45.7 661.9,48.1 661.9,53.5 657.1,50.8" fill="#f0f0f0" />
<polygon points="657.1,50.8 661.9,53.5 661.9,58.9 657.2,55.8" fill="#000" />
<polygon points="662.5,43.2 668.3,41.4 668.9,43.5 673.5,38.4 666.8,36.7 667.4,38.7 661.6,40.5" fill="#2aa018" stroke="#145808" stroke-width="0.5" stroke-linejoin="round" />
<polyline points="643.6,52.8 650.5,60.4" fill="none" stroke="#000" stroke-width="1.6" stroke-linecap="round" stroke-linejoin="round" />
<polyline points="650.5,52.8 643.6,60.4" fill="none" stroke="#000" stroke-width="1.6" stroke-linecap="round" stroke-linejoin="round" />
<polyline points="644.3,50.9 650.2,58.9" fill="none" stroke="#22961a" stroke-width="1.8" stroke-linecap="round" stroke-linejoin="round" />
<polyline points="650.2,50.9 644.3,58.9" fill="none" stroke="#22961a" stroke-width="1.8" stroke-linecap="round" stroke-linejoin="round" />
<text x="655.8" y="59.5" font-size="11.5" font-weight="bold" fill="#000" stroke="#000" stroke-width="0.3">Map</text>
</g>
<g clip-path="url(#c20)">
<polygon points="679.2,32.8 682.1,37.3 682.1,43.0 679.2,39.2" fill="#0a0a0a" />
<polygon points="679.2,39.2 682.1,43.0 682.1,48.8 679.2,45.6" fill="#f0f0f0" />
<polygon points="679.2,45.6 682.1,48.8 682.1,54.6 679.2,52.0" fill="#0a0a0a" />
<polygon points="682.1,37.3 685.6,39.8 685.6,45.4 682.1,43.0" fill="#f0f0f0" />
<polygon points="682.1,43.0 685.6,45.4 685.6,50.9 682.1,48.8" fill="#0a0a0a" />
<polygon points="682.1,48.8 685.6,50.9 685.6,56.5 682.1,54.6" fill="#f0f0f0" />
<polygon points="685.6,39.8 689.6,40.8 689.6,46.3 685.6,45.4" fill="#0a0a0a" />
<polygon points="685.6,45.4 689.6,46.3 689.6,51.8 685.6,50.9" fill="#f0f0f0" />
<polygon points="685.6,50.9 689.6,51.8 689.6,57.3 685.6,56.5" fill="#0a0a0a" />
<polygon points="689.6,40.8 693.6,40.5 693.6,45.8 689.6,46.3" fill="#f0f0f0" />
<polygon points="689.6,46.3 693.6,45.8 693.6,51.1 689.6,51.8" fill="#0a0a0a" />
<polygon points="689.6,51.8 693.6,51.1 693.6,56.5 689.6,57.3" fill="#f0f0f0" />
<polygon points="693.6,40.5 697.6,39.2 697.6,44.3 693.6,45.8" fill="#0a0a0a" />
<polygon points="693.6,45.8 697.6,44.3 697.6,49.3 693.6,51.1" fill="#f0f0f0" />
<polygon points="693.6,51.1 697.6,49.3 697.6,54.4 693.6,56.5" fill="#0a0a0a" />
<polygon points="679.2,32.8 681.6,30.9 685.9,31.5 684.0,34.4 682.1,37.3" fill="#282828" />
<polygon points="680.8,32.0 684.8,31.8 683.4,33.8" fill="#909090" />
<polygon points="697.3,44.9 703.7,40.3 704.9,42.0 707.4,36.0 700.9,36.3 702.1,38.0 695.6,42.5" fill="#2aa018" stroke="#145808" stroke-width="0.5" stroke-linejoin="round" />
<polygon points="691.7,53.6 701.6,51.2 702.1,53.6 698.4,54.6 698.1,60.0 695.2,60.5 695.5,55.2 692.2,56.0" fill="#28a818" stroke="#0c4808" stroke-width="0.6" stroke-linejoin="round" />
</g>
<g clip-path="url(#c21)">
<clipPath id="sph"><circle cx="723.8" cy="46.0" r="10.8"/></clipPath>
<g clip-path="url(#sph)">
<polygon points="711.1,33.1 717.3,33.1 717.3,39.2 711.1,39.2" fill="#f0f0f0" />
<polygon points="711.1,39.2 717.3,39.2 717.3,45.4 711.1,45.4" fill="#000" />
<polygon points="711.1,45.4 717.3,45.4 717.3,51.6 711.1,51.6" fill="#f0f0f0" />
<polygon points="711.1,51.6 717.3,51.6 717.3,57.8 711.1,57.8" fill="#000" />
<polygon points="717.3,33.1 723.5,33.1 723.5,39.2 717.3,39.2" fill="#000" />
<polygon points="717.3,39.2 723.5,39.2 723.5,45.4 717.3,45.4" fill="#f0f0f0" />
<polygon points="717.3,45.4 723.5,45.4 723.5,51.6 717.3,51.6" fill="#000" />
<polygon points="717.3,51.6 723.5,51.6 723.5,57.8 717.3,57.8" fill="#f0f0f0" />
<polygon points="723.5,33.1 729.6,33.1 729.6,39.2 723.5,39.2" fill="#f0f0f0" />
<polygon points="723.5,39.2 729.6,39.2 729.6,45.4 723.5,45.4" fill="#000" />
<polygon points="723.5,45.4 729.6,45.4 729.6,51.6 723.5,51.6" fill="#f0f0f0" />
<polygon points="723.5,51.6 729.6,51.6 729.6,57.8 723.5,57.8" fill="#000" />
<polygon points="729.6,33.1 735.8,33.1 735.8,39.2 729.6,39.2" fill="#000" />
<polygon points="729.6,39.2 735.8,39.2 735.8,45.4 729.6,45.4" fill="#f0f0f0" />
<polygon points="729.6,45.4 735.8,45.4 735.8,51.6 729.6,51.6" fill="#000" />
<polygon points="729.6,51.6 735.8,51.6 735.8,57.8 729.6,57.8" fill="#f0f0f0" />
</g>
<polygon points="714.6,37.2 717.6,32.5 722.3,31.6 720.5,34.8 721.1,38.9 717.6,40.7" fill="#101010"/>
<circle cx="723.8" cy="46.0" r="10.8" fill="none" stroke="#303030" stroke-width="0.6"/>
<polygon points="732.5,42.3 738.8,38.9 739.8,40.7 743.1,34.9 736.5,34.5 737.5,36.4 731.2,39.8" fill="#2aa018" stroke="#145808" stroke-width="0.5" stroke-linejoin="round" />
<polygon points="727.0,56.8 731.1,54.0 731.9,55.3 730.5,56.3 732.7,60.3 731.4,61.2 729.2,57.2 727.8,58.2" fill="#28a818" stroke="#0c4808" stroke-width="0.6" stroke-linejoin="round" />
<polyline points="725.2,59.5 735.8,54.8" fill="none" stroke="#000" stroke-width="0.9" stroke-linecap="round" stroke-linejoin="round" />
</g>
<g clip-path="url(#c22)">
<polygon points="747.0,35.2 751.8,34.3 752.0,39.7 747.3,40.7" fill="#000" />
<polygon points="747.3,40.7 752.0,39.7 752.2,45.2 747.5,46.2" fill="#f0f0f0" />
<polygon points="747.5,46.2 752.2,45.2 752.4,50.6 747.8,51.6" fill="#000" />
<polygon points="751.8,34.3 756.6,33.4 756.7,38.8 752.0,39.7" fill="#f0f0f0" />
<polygon points="752.0,39.7 756.7,38.8 756.8,44.2 752.2,45.2" fill="#000" />
<polygon points="752.2,45.2 756.8,44.2 756.9,49.6 752.4,50.6" fill="#f0f0f0" />
<polygon points="756.6,33.4 761.5,32.5 761.5,37.8 756.7,38.8" fill="#000" />
<polygon points="756.7,38.8 761.5,37.8 761.5,43.2 756.8,44.2" fill="#f0f0f0" />
<polygon points="756.8,44.2 761.5,43.2 761.5,48.6 756.9,49.6" fill="#000" />
<polygon points="761.9,32.5 766.5,33.4 766.4,38.8 761.9,37.8" fill="#f0f0f0" />
<polygon points="761.9,37.8 766.4,38.8 766.3,44.2 761.9,43.2" fill="#000" />
<polygon points="761.9,43.2 766.3,44.2 766.3,49.6 761.9,48.6" fill="#f0f0f0" />
<polygon points="766.5,33.4 771.0,34.3 770.9,39.7 766.4,38.8" fill="#000" />
<polygon points="766.4,38.8 770.9,39.7 770.7,45.2 766.3,44.2" fill="#f0f0f0" />
<polygon points="766.3,44.2 770.7,45.2 770.6,50.6 766.3,49.6" fill="#000" />
<polygon points="771.0,34.3 775.6,35.2 775.4,40.7 770.9,39.7" fill="#f0f0f0" />
<polygon points="770.9,39.7 775.4,40.7 775.1,46.2 770.7,45.2" fill="#000" />
<polygon points="770.7,45.2 775.1,46.2 774.9,51.6 770.6,50.6" fill="#f0f0f0" />
<polygon points="747.8,52.1 752.4,51.1 756.9,53.4 752.4,55.0" fill="#000" />
<polygon points="752.4,55.0 756.9,53.4 761.5,55.6 756.9,57.9" fill="#f0f0f0" />
<polygon points="756.9,57.9 761.5,55.6 766.0,57.9 761.5,60.8" fill="#000" />
<polygon points="752.4,51.1 756.9,50.1 761.5,51.7 756.9,53.4" fill="#f0f0f0" />
<polygon points="756.9,53.4 761.5,51.7 766.0,53.4 761.5,55.6" fill="#000" />
<polygon points="761.5,55.6 766.0,53.4 770.6,55.0 766.0,57.9" fill="#f0f0f0" />
<polygon points="756.9,50.1 761.5,49.1 766.0,50.1 761.5,51.7" fill="#000" />
<polygon points="761.5,51.7 766.0,50.1 770.6,51.1 766.0,53.4" fill="#f0f0f0" />
<polygon points="766.0,53.4 770.6,51.1 775.1,52.1 770.6,55.0" fill="#000" />
<polygon points="754.4,38.0 768.5,38.0 768.5,42.5 764.3,42.5 764.3,51.6 758.8,51.6 758.8,42.5 754.4,42.5" fill="#22b018" stroke="#0a5008" stroke-width="1" stroke-linejoin="round" />
</g>
<g clip-path="url(#c23)" shape-rendering="crispEdges">
<rect x="781.5" y="31.5" width="27" height="28" fill="#c4c4c4" stroke="#000" stroke-width="1"/>
<rect x="782" y="32" width="26" height="1" fill="#1c5cd8" />
<rect x="782" y="33" width="26" height="1" fill="#3c94ec" />
<rect x="782" y="34" width="26" height="1" fill="#e8e8e8" />
<rect x="782" y="35" width="26" height="2" fill="#b4b4b4" />
<rect x="784" y="35" width="1" height="1" fill="#2a6a3a" />
<rect x="786" y="35" width="1" height="1" fill="#2a6a3a" />
<rect x="788" y="35" width="1" height="1" fill="#2a6a3a" />
<rect x="790" y="35" width="1" height="1" fill="#2a6a3a" />
<rect x="783" y="37" width="25" height="1" fill="#707070" />
<rect x="783" y="37" width="1" height="21" fill="#707070" />
</g>
<g clip-path="url(#c23)">
<polygon points="787.9,38.2 791.3,39.5 791.6,42.9 788.2,41.6" fill="#000" />
<polygon points="788.2,41.6 791.6,42.9 791.8,46.3 788.6,44.9" fill="#f0f0f0" />
<polygon points="788.6,44.9 791.8,46.3 792.0,49.7 788.9,48.3" fill="#000" />
<polygon points="788.9,48.3 792.0,49.7 792.3,53.2 789.3,51.6" fill="#f0f0f0" />
<polygon points="791.3,39.5 794.8,40.7 794.9,44.2 791.6,42.9" fill="#f0f0f0" />
<polygon points="791.6,42.9 794.9,44.2 795.0,47.7 791.8,46.3" fill="#000" />
<polygon points="791.8,46.3 795.0,47.7 795.1,51.2 792.0,49.7" fill="#f0f0f0" />
<polygon points="792.0,49.7 795.1,51.2 795.3,54.7 792.3,53.2" fill="#000" />
<polygon points="794.8,40.7 798.2,42.0 798.2,45.6 794.9,44.2" fill="#000" />
<polygon points="794.9,44.2 798.2,45.6 798.2,49.2 795.0,47.7" fill="#f0f0f0" />
<polygon points="795.0,47.7 798.2,49.2 798.2,52.7 795.1,51.2" fill="#000" />
<polygon points="795.1,51.2 798.2,52.7 798.2,56.3 795.3,54.7" fill="#f0f0f0" />
<polygon points="799.0,46.9 804.5,44.6 805.0,45.7 806.9,42.9 803.6,42.2 804.0,43.3 798.4,45.6" fill="#2aa018" stroke="#145808" stroke-width="0.5" stroke-linejoin="round" />
<polygon points="787.1,51.6 791.0,50.1 791.4,51.3 790.1,51.8 791.1,55.5 789.9,56.0 788.8,52.3 787.5,52.8" fill="#28a818" stroke="#0c4808" stroke-width="0.6" stroke-linejoin="round" />
</g>
<defs>
<filter id="grain" x="0" y="0" width="100%" height="100%" filterUnits="objectBoundingBox" color-interpolation-filters="sRGB">
<feTurbulence type="fractalNoise" baseFrequency="0.9" numOctaves="2" seed="7" result="n"/>
<feColorMatrix in="n" type="matrix" values="0.7 0.3 0 0 0  0.35 0.65 0 0 0  0.3 0.3 0.4 0 0  0 0 0 0 1" result="g"/>
<feComposite in="SourceGraphic" in2="g" operator="arithmetic" k1="1.1" k2="0.45" k3="0.3" k4="-0.15" result="m"/>
<feComposite in="m" in2="SourceGraphic" operator="in"/>
</filter>
<filter id="grain2" x="0" y="0" width="100%" height="100%" filterUnits="objectBoundingBox" color-interpolation-filters="sRGB">
<feTurbulence type="fractalNoise" baseFrequency="0.8" numOctaves="2" seed="11" result="n"/>
<feColorMatrix in="n" type="matrix" values="1 0 0 0 0  1 0 0 0 0  1 0 0 0 0  0 0 0 0 1" result="g"/>
<feComposite in="SourceGraphic" in2="g" operator="arithmetic" k1="0.44" k2="0.78" k3="0" k4="0" result="m"/>
<feComposite in="m" in2="SourceGraphic" operator="in"/>
</filter>
<linearGradient id="moundg" x1="0" y1="0.7" x2="1" y2="0.2"><stop offset="0" stop-color="#ac7a3c"/><stop offset="0.5" stop-color="#a07238"/><stop offset="1" stop-color="#8a6232"/></linearGradient>
<linearGradient id="trackg" gradientUnits="userSpaceOnUse" x1="520" y1="0" x2="760" y2="0"><stop offset="0" stop-color="#86643b"/><stop offset="1" stop-color="#83613a"/></linearGradient>
<clipPath id="vp"><rect x="12" y="95" width="831" height="717"/></clipPath>
</defs>
<g clip-path="url(#vp)">
<g filter="url(#grain2)" shape-rendering="crispEdges">
<polygon points="23.0,409.6 24.0,406.0 26.5,402.5 36.0,396.0 50.0,389.0 70.0,380.0 90.0,371.0 110.0,363.0 130.0,355.6 150.0,347.8 170.0,340.3 187.6,333.3 225.3,320.1 262.9,308.8 290.0,301.0 310.0,297.0 330.0,293.6 350.0,291.0 370.0,289.4 390.0,288.0 410.0,287.0 430.0,286.8 460.0,287.0 480.0,287.6 500.0,289.4 520.0,291.4 540.0,294.0 560.0,297.6 580.0,301.0 600.0,305.0 620.0,309.0 630.0,311.0 650.0,315.0 670.0,319.0 690.0,324.4 710.0,330.0 730.0,335.0 750.0,340.0 770.0,344.4 790.0,348.4 806.0,353.0 814.0,357.6 817.0,362.4 816.0,366.0 770.1,430.0 714.0,509.0 643.0,603.0 643.8,612.0 642.6,620.2 638.0,630.5 631.5,639.6 620.0,650.0 608.2,657.8 600.0,661.0 580.0,666.0 560.0,668.4 540.0,667.6 520.0,663.6 500.0,656.0 480.0,645.0 468.0,634.0 460.0,624.0 446.0,617.0 430.0,610.0 294.7,545.2 130.0,464.6 50.0,426.0 28.0,415.6" fill="url(#trackg)" />
</g>
<g filter="url(#grain)" shape-rendering="crispEdges">
<polygon points="49.4,408.2 52.0,403.0 59.0,397.0 70.0,391.0 90.0,382.0 110.0,373.6 130.0,365.6 150.0,357.8 170.0,350.3 187.6,342.8 225.3,327.8 262.9,315.0 290.0,308.0 310.0,303.6 330.0,299.8 350.0,297.0 370.0,295.0 390.0,293.4 410.0,292.4 430.0,292.0 460.0,292.0 480.0,292.6 500.0,294.4 520.0,296.6 540.0,299.4 560.0,303.0 580.0,306.6 600.0,311.0 620.0,315.0 630.0,317.4 650.0,321.5 670.0,325.6 690.0,331.0 710.0,336.0 730.0,341.0 750.0,346.0 770.0,350.6 786.0,354.4 793.0,357.6 796.5,361.6 743.3,430.0 682.6,506.0 612.0,593.0 616.0,600.0 618.3,609.0 615.0,619.0 608.2,628.0 600.0,636.0 590.0,642.0 570.0,648.0 550.0,650.0 530.0,648.0 510.0,642.0 494.0,632.0 484.0,621.0 481.0,614.0 478.0,607.0 470.0,603.0 450.0,594.0 294.7,522.0 130.0,446.0 70.0,418.6" fill="#3d4523" />
</g>
<g filter="url(#grain2)" shape-rendering="crispEdges">
<polygon points="298.4,495.4 304.0,489.8 315.3,479.2 329.4,467.2 343.5,457.3 357.6,448.8 371.8,441.8 385.9,435.6 400.0,431.4 410.0,429.0 430.0,424.4 450.0,421.6 470.0,420.0 490.0,419.8 510.0,420.4 530.0,422.0 550.0,424.6 567.6,428.5 585.3,433.0 603.0,438.2 620.6,444.4 638.2,451.5 655.9,459.4 673.5,466.5 683.2,469.6 670.0,483.0 650.0,505.0 630.0,527.0 610.0,550.0 590.0,572.0 572.0,591.0 549.0,606.0 514.0,597.0 470.0,579.0 430.0,562.0 379.4,539.3 356.0,529.5 320.0,514.0 290.0,500.4" fill="#86643b" />
</g>
<g filter="url(#grain)" shape-rendering="crispEdges">
<polygon points="476.8,453.6 480.0,454.3 520.0,467.5 590.0,488.3 622.0,498.2 627.5,501.0 628.0,504.0 610.0,523.0 590.0,545.5 558.0,583.0 540.0,583.0 524.0,585.0 480.0,568.5 430.0,547.5 384.0,526.5 379.6,523.6 381.5,520.5 392.0,517.0 450.0,474.0 473.5,455.5" fill="#2c4423" />
</g>
<g filter="url(#grain2)">
<ellipse cx="547.5" cy="603.3" rx="34.4" ry="21.3" fill="#86643b" transform="rotate(5 547.5 603.3)"/>
<ellipse cx="506.7" cy="514" rx="20.6" ry="11" fill="url(#moundg)" transform="rotate(2 506.7 514)"/>
</g>
<polygon points="59.2,398.4 542.8,600.0 543.6,597.8 59.8,396.8" fill="#b2b2b2" />
<polygon points="780.4,353.2 548.4,597.5 550.0,599.1 781.6,354.4" fill="#b2b2b2" />
<g stroke="#b2b2b2" stroke-width="1.7" fill="none" stroke-linecap="butt" stroke-linejoin="miter">
<path d="M366.3,524.6 L476.8,448.4 L639.3,502"/>
</g>
<polyline points="565.2,586.0 568.7,587.6 571.8,589.5 574.6,591.6 576.9,593.9 578.9,596.3 580.3,598.9 581.3,601.4 581.8,604.1 581.7,606.7 581.2,609.2 580.1,611.7 578.6,614.0 576.6,616.2 574.1,618.2 571.3,620.0 568.1,621.5 564.6,622.7 560.9,623.7 556.9,624.3 552.8,624.7 548.6,624.7 544.4,624.4 540.3,623.8 536.3,622.9 532.4,621.7 528.8,620.2 525.4,618.4 522.4,616.5 519.7,614.3 517.5,612.0 515.7,609.6 514.3,607.0 513.5,604.4 513.2,601.8 513.4,599.2 514.1,596.7 515.3,594.2 516.9,591.9 519.1,589.8 521.6,587.9" fill="none" stroke="#c2beb6" stroke-width="1"/>
<g fill="none" stroke="#d2cfc6" stroke-width="0.9">
<path d="M541,598.8 L535.2,599.6 L538.9,607.6 L543.6,606.3 L546.3,606.8 L548.9,614.2 L552.6,614.7 L555.8,613.6 L552.6,605.7 L559.5,605.2 L555.8,597.2 L553.2,597.4"/>
</g>
<rect x="544.8" y="599.9" width="3.4" height="2" fill="#dcdcdc"/>
<rect x="506.3" y="514.7" width="4.6" height="1.2" fill="#b4c8e4"/>
<g fill="none" stroke="#c8c6b4" stroke-width="0.8">
<path d="M345.5,536.6 L359.2,538.8 L356,544.4 L342.6,541.6 Z"/>
<path d="M661.5,508 L659.3,514 M669.5,510 L666.8,516.6 M659.3,514 L662,514.8 M666.8,516.6 L664.5,516"/>
</g>
<g fill="none" stroke="#d9cdb6" stroke-width="0.8" stroke-dasharray="5 1.5">
<ellipse cx="490.6" cy="638.4" rx="9.6" ry="6.4"/>
<ellipse cx="629" cy="623.3" rx="9.2" ry="6.1"/>
</g>
</g>
<text x="26.9" y="108" font-size="11" fill="#004412" font-weight="bold" textLength="33.8" lengthAdjust="spacingAndGlyphs" stroke="#004412" stroke-width="0.35">Verts:</text>
<text x="76.6" y="108" font-size="11" fill="#ffffff" font-weight="bold" textLength="18" lengthAdjust="spacingAndGlyphs" stroke="#fff" stroke-width="0.3">579</text>
<text x="126.6" y="108" font-size="11" fill="#ffffff" font-weight="bold" stroke="#fff" stroke-width="0.3">0</text>
<text x="176.7" y="108" font-size="11" fill="#ffffff" font-weight="bold" stroke="#fff" stroke-width="0.3">0</text>
<text x="26.9" y="128" font-size="11" fill="#004412" font-weight="bold" textLength="37.5" lengthAdjust="spacingAndGlyphs" stroke="#004412" stroke-width="0.35">Edges:</text>
<text x="76.6" y="128" font-size="11" fill="#ffffff" font-weight="bold" textLength="24" lengthAdjust="spacingAndGlyphs" stroke="#fff" stroke-width="0.3">1102</text>
<text x="126.6" y="128" font-size="11" fill="#ffffff" font-weight="bold" stroke="#fff" stroke-width="0.3">0</text>
<text x="176.7" y="128" font-size="11" fill="#ffffff" font-weight="bold" stroke="#fff" stroke-width="0.3">0</text>
<text x="26.9" y="148" font-size="11" fill="#004412" font-weight="bold" textLength="36.5" lengthAdjust="spacingAndGlyphs" stroke="#004412" stroke-width="0.35">Faces:</text>
<text x="76.6" y="148" font-size="11" fill="#ffffff" font-weight="bold" textLength="18" lengthAdjust="spacingAndGlyphs" stroke="#fff" stroke-width="0.3">524</text>
<text x="126.6" y="148" font-size="11" fill="#ffffff" font-weight="bold" stroke="#fff" stroke-width="0.3">0</text>
<text x="176.7" y="148" font-size="11" fill="#ffffff" font-weight="bold" stroke="#fff" stroke-width="0.3">0</text>
<text x="26.9" y="168" font-size="11" fill="#004412" font-weight="bold" textLength="25.5" lengthAdjust="spacingAndGlyphs" stroke="#004412" stroke-width="0.35">Tris:</text>
<text x="76.6" y="168" font-size="11" fill="#ffffff" font-weight="bold" textLength="18" lengthAdjust="spacingAndGlyphs" stroke="#fff" stroke-width="0.3">930</text>
<text x="126.6" y="168" font-size="11" fill="#ffffff" font-weight="bold" stroke="#fff" stroke-width="0.3">0</text>
<text x="176.7" y="168" font-size="11" fill="#ffffff" font-weight="bold" stroke="#fff" stroke-width="0.3">0</text>
<text x="26.9" y="188" font-size="11" fill="#004412" font-weight="bold" textLength="25.5" lengthAdjust="spacingAndGlyphs" stroke="#004412" stroke-width="0.35">UVs:</text>
<text x="76.6" y="188" font-size="11" fill="#ffffff" font-weight="bold" textLength="18" lengthAdjust="spacingAndGlyphs" stroke="#fff" stroke-width="0.3">579</text>
<text x="126.6" y="188" font-size="11" fill="#ffffff" font-weight="bold" stroke="#fff" stroke-width="0.3">0</text>
<text x="176.7" y="188" font-size="11" fill="#ffffff" font-weight="bold" stroke="#fff" stroke-width="0.3">0</text>
<text x="406" y="805" font-size="11" fill="#004412" font-weight="bold" textLength="32" lengthAdjust="spacingAndGlyphs" stroke="#004412" stroke-width="0.35">persp</text>
<g>
<text x="799.5" y="111.5" font-size="11" fill="#111" font-weight="bold" >y</text>
<text x="794.5" y="124.5" font-size="11" fill="#111" font-weight="bold" >z</text>
<text x="767.5" y="142" font-size="11" fill="#111" font-weight="bold" >x</text>
<polygon points="799.3,116 806.8,115.4 804.6,128.5 802.6,128.5" fill="#1f7a52"/>
<ellipse cx="803" cy="115.8" rx="3.8" ry="1.2" fill="#2a8a60"/>
<path d="M795.3,127.2 Q796.5,124.6 800,125 Q803.4,125.6 802.8,129 L800.9,134.6 Z" fill="#1414d6"/>
<polygon points="777,137.8 777,145.8 792,140.6" fill="#e02222"/>
<polygon points="777,137.8 792,140.6 777,141.2" fill="#f03a3a"/>
<polygon points="796,132.5 798.5,131.2 798.5,146 796,144.2" fill="#3c5866"/>
<polygon points="798.5,131.5 810,132.5 810.5,147.5 798.5,147" fill="#6fc6e6"/>
<polygon points="804,144.5 811,145 811,153.5 804.5,154.5" fill="#74cdea"/>
<polygon points="803,142 807,146.5 803.5,148" fill="#3c5866"/>
<polygon points="814.5,139 829,134 829,142.2" fill="#b4e8f8"/>
<polygon points="814.5,139 829,138.5 829,142.2" fill="#8ad8f0"/>
<polygon points="805.8,150 807.4,164 799.6,164" fill="#8adcf4"/>
<polygon points="805.8,150 803.4,164.6 799.6,164" fill="#b0e8f8"/>
</g>
<g shape-rendering="crispEdges">
<rect x="18" y="526" width="196" height="18" fill="#9f9f9f" />
<rect x="18" y="544" width="196" height="256" fill="#ffffff" />
<rect x="20.5" y="529.5" width="10" height="10" fill="none" stroke="#000" stroke-width="1.2"/>
<rect x="22" y="534" width="7" height="1" fill="#000" />
</g>
<g stroke="#e9e6d2" stroke-width="1" fill="none">
<path d="M73.5,537 V734.5"/>
<path d="M73.5,554.5 H91"/>
<circle cx="93.5" cy="554.5" r="2.3" fill="#fff"/>
<path d="M73.5,574.5 H91"/>
<circle cx="93.5" cy="574.5" r="2.3" fill="#fff"/>
<path d="M73.5,594.5 H91"/>
<circle cx="93.5" cy="594.5" r="2.3" fill="#fff"/>
<path d="M73.5,614.5 H91"/>
<circle cx="93.5" cy="614.5" r="2.3" fill="#fff"/>
<path d="M73.5,634.5 H91"/>
<circle cx="93.5" cy="634.5" r="2.3" fill="#fff"/>
<path d="M73.5,654.5 H91"/>
<circle cx="93.5" cy="654.5" r="2.3" fill="#fff"/>
<path d="M73.5,674.5 H91"/>
<circle cx="93.5" cy="674.5" r="2.3" fill="#fff"/>
<path d="M73.5,694.5 H91"/>
<circle cx="93.5" cy="694.5" r="2.3" fill="#fff"/>
<path d="M73.5,714.5 H91"/>
<circle cx="93.5" cy="714.5" r="2.3" fill="#fff"/>
<path d="M73.5,734.5 H91"/>
<circle cx="93.5" cy="734.5" r="2.3" fill="#fff"/>
</g>
<circle cx="73.6" cy="534.2" r="2.4" fill="none" stroke="#ebe8d0" stroke-width="1.1"/>
<polygon points="57.2,528.8 69,528.8 64.6,539.6 52.6,539.6" fill="#fff" stroke="#000" stroke-width="1.2"/>
<text x="81.8" y="538" font-size="11" fill="#ffffff" font-weight="normal" textLength="85.3" lengthAdjust="spacingAndGlyphs" >BaseBall_Field_01</text>
<polygon points="50.2,550.4 60.4,547.2 69.6,554.3 57.8,561.4" fill="#2aa6e0" stroke="#0a0ae6" stroke-width="1.5" stroke-linejoin="round"/>
<path d="M55.3,548.8 L63.3,558.1 M64.7,550.5 L53.8,555.6" stroke="#0a0ae6" stroke-width="1.5" fill="none"/>
<text x="101.8" y="558.4" font-size="11" fill="#000" font-weight="normal" textLength="67.4" lengthAdjust="spacingAndGlyphs"  stroke="#000" stroke-width="0.25">BBall_Field_01</text>
<polygon points="50.2,570.4 60.4,567.2 69.6,574.3 57.8,581.4" fill="#2aa6e0" stroke="#0a0ae6" stroke-width="1.5" stroke-linejoin="round"/>
<path d="M55.3,568.8 L63.3,578.1 M64.7,570.5 L53.8,575.6" stroke="#0a0ae6" stroke-width="1.5" fill="none"/>
<text x="101.8" y="578.4" font-size="11" fill="#000" font-weight="normal" textLength="81.8" lengthAdjust="spacingAndGlyphs"  stroke="#000" stroke-width="0.25">PitcherMound_01</text>
<polygon points="50.2,590.4 60.4,587.2 69.6,594.3 57.8,601.4" fill="#2aa6e0" stroke="#0a0ae6" stroke-width="1.5" stroke-linejoin="round"/>
<path d="M55.3,588.8 L63.3,598.1 M64.7,590.5 L53.8,595.6" stroke="#0a0ae6" stroke-width="1.5" fill="none"/>
<text x="101.8" y="598.4" font-size="11" fill="#000" font-weight="normal" textLength="73" lengthAdjust="spacingAndGlyphs"  stroke="#000" stroke-width="0.25">Base_Home_01</text>
<polygon points="50.2,610.4 60.4,607.2 69.6,614.3 57.8,621.4" fill="#2aa6e0" stroke="#0a0ae6" stroke-width="1.5" stroke-linejoin="round"/>
<path d="M55.3,608.8 L63.3,618.1 M64.7,610.5 L53.8,615.6" stroke="#0a0ae6" stroke-width="1.5" fill="none"/>
<text x="101.8" y="618.4" font-size="11" fill="#000" font-weight="normal" textLength="65" lengthAdjust="spacingAndGlyphs"  stroke="#000" stroke-width="0.25">Base_First_01</text>
<polygon points="50.2,630.4 60.4,627.2 69.6,634.3 57.8,641.4" fill="#2aa6e0" stroke="#0a0ae6" stroke-width="1.5" stroke-linejoin="round"/>
<path d="M55.3,628.8 L63.3,638.1 M64.7,630.5 L53.8,635.6" stroke="#0a0ae6" stroke-width="1.5" fill="none"/>
<text x="101.8" y="638.4" font-size="11" fill="#000" font-weight="normal" textLength="82.7" lengthAdjust="spacingAndGlyphs"  stroke="#000" stroke-width="0.25">Base_Second_01</text>
<polygon points="50.2,650.4 60.4,647.2 69.6,654.3 57.8,661.4" fill="#2aa6e0" stroke="#0a0ae6" stroke-width="1.5" stroke-linejoin="round"/>
<path d="M55.3,648.8 L63.3,658.1 M64.7,650.5 L53.8,655.6" stroke="#0a0ae6" stroke-width="1.5" fill="none"/>
<text x="101.8" y="658.4" font-size="11" fill="#000" font-weight="normal" textLength="70" lengthAdjust="spacingAndGlyphs"  stroke="#000" stroke-width="0.25">Base_Third_01</text>
<polygon points="50.2,670.4 60.4,667.2 69.6,674.3 57.8,681.4" fill="#2aa6e0" stroke="#0a0ae6" stroke-width="1.5" stroke-linejoin="round"/>
<path d="M55.3,668.8 L63.3,678.1 M64.7,670.5 L53.8,675.6" stroke="#0a0ae6" stroke-width="1.5" fill="none"/>
<text x="101.8" y="678.4" font-size="11" fill="#000" font-weight="normal" textLength="69" lengthAdjust="spacingAndGlyphs"  stroke="#000" stroke-width="0.25">OnDeck_A_01</text>
<polygon points="50.2,690.4 60.4,687.2 69.6,694.3 57.8,701.4" fill="#2aa6e0" stroke="#0a0ae6" stroke-width="1.5" stroke-linejoin="round"/>
<path d="M55.3,688.8 L63.3,698.1 M64.7,690.5 L53.8,695.6" stroke="#0a0ae6" stroke-width="1.5" fill="none"/>
<text x="101.8" y="698.4" font-size="11" fill="#000" font-weight="normal" textLength="69" lengthAdjust="spacingAndGlyphs"  stroke="#000" stroke-width="0.25">OnDeck_B_01</text>
<polygon points="50.2,710.4 60.4,707.2 69.6,714.3 57.8,721.4" fill="#2aa6e0" stroke="#0a0ae6" stroke-width="1.5" stroke-linejoin="round"/>
<path d="M55.3,708.8 L63.3,718.1 M64.7,710.5 L53.8,715.6" stroke="#0a0ae6" stroke-width="1.5" fill="none"/>
<text x="101.8" y="718.4" font-size="11" fill="#000" font-weight="normal" textLength="78" lengthAdjust="spacingAndGlyphs"  stroke="#000" stroke-width="0.25">CoachBox_A_01</text>
<polygon points="50.2,730.4 60.4,727.2 69.6,734.3 57.8,741.4" fill="#2aa6e0" stroke="#0a0ae6" stroke-width="1.5" stroke-linejoin="round"/>
<path d="M55.3,728.8 L63.3,738.1 M64.7,730.5 L53.8,735.6" stroke="#0a0ae6" stroke-width="1.5" fill="none"/>
<text x="101.8" y="738.4" font-size="11" fill="#000" font-weight="normal" textLength="78" lengthAdjust="spacingAndGlyphs"  stroke="#000" stroke-width="0.25">CoachBox_B_01</text>
<circle cx="60" cy="753.9" r="8.2" fill="#fff" stroke="#10108c" stroke-width="2"/>
<rect x="58.6" y="747.5" width="5.2" height="6.6" rx="1" fill="#1e90f0" transform="rotate(14 61 750.5)"/>
<circle cx="57.8" cy="755.9" r="4" fill="#ffe818"/>
<text x="81.8" y="757.9" font-size="11" fill="#000" font-weight="normal" textLength="70.6" lengthAdjust="spacingAndGlyphs"  stroke="#000" stroke-width="0.25">defaultLightSet</text>
<circle cx="60" cy="773.9" r="8.2" fill="#fff" stroke="#10108c" stroke-width="2"/>
<rect x="58.6" y="767.5" width="5.2" height="6.6" rx="1" fill="#1e90f0" transform="rotate(14 61 770.5)"/>
<circle cx="57.8" cy="775.9" r="4" fill="#ffe818"/>
<text x="81.8" y="777.9" font-size="11" fill="#000" font-weight="normal" textLength="78.7" lengthAdjust="spacingAndGlyphs"  stroke="#000" stroke-width="0.25">defaultObjectSet</text>
</svg>
</body></html>
